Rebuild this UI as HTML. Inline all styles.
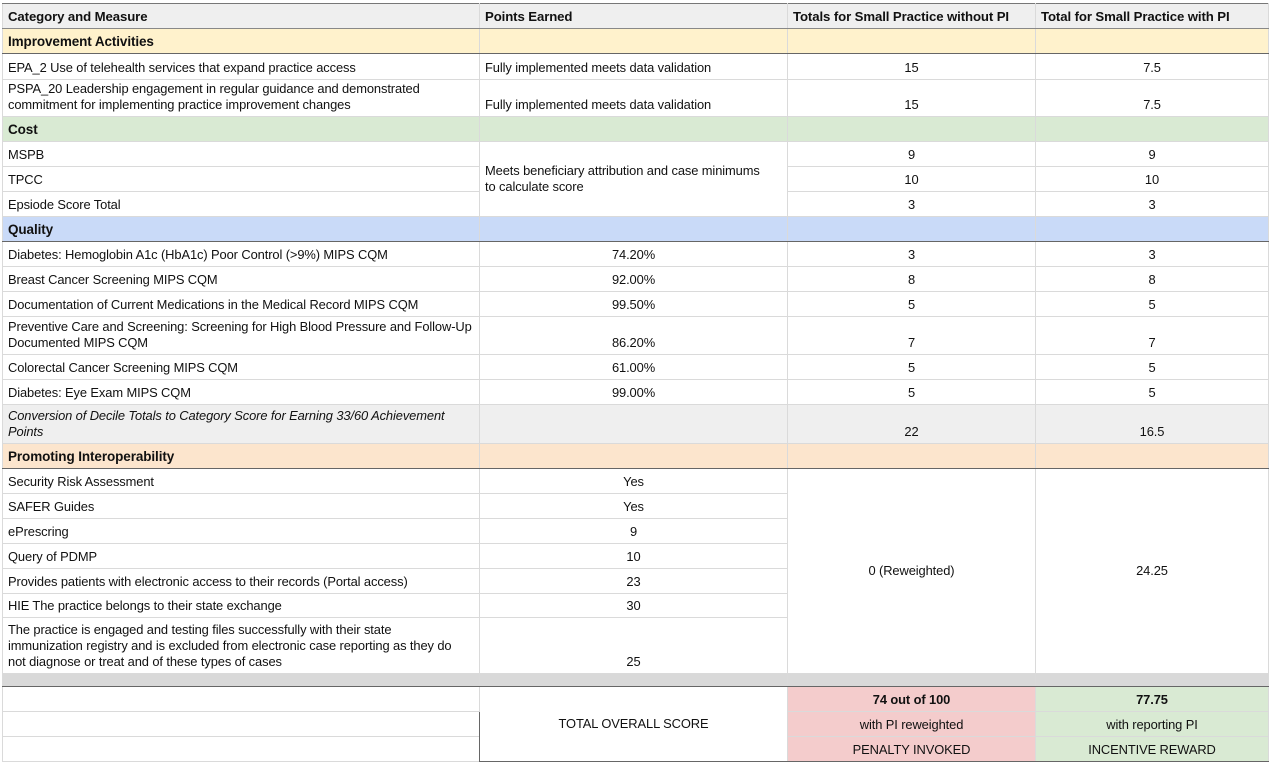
<!DOCTYPE html>
<html><head><meta charset="utf-8"><style>
body{margin:0;background:#fff;width:1270px;height:763px;overflow:hidden;font-family:"Liberation Sans",Arial,sans-serif;}
table{position:absolute;left:2px;top:3px;border-collapse:collapse;table-layout:fixed;font-size:12.9px;color:#111;}
td{border:1px solid #dadada;padding:0 5px 3px 5px;vertical-align:bottom;line-height:16px;overflow:hidden;white-space:nowrap;letter-spacing:-0.1px}
td.c{text-align:center}
td.m{vertical-align:middle;padding-bottom:0}
tr.h td{background:#efefef;font-weight:bold;border-top:1px solid #777;border-bottom:1px solid #888;font-size:13.2px}
tr.ia td{background:#fff2cc;font-weight:bold;border-bottom:1px solid #666;font-size:13.5px}
tr.co td{background:#d9ead3;font-weight:bold;font-size:13.5px}
tr.q td{background:#c9daf8;font-weight:bold;border-bottom:1px solid #666;font-size:13.5px}
tr.pi td{background:#fce5cd;font-weight:bold;border-bottom:1px solid #666;font-size:13.5px}
tr.cv td{background:#efefef}
tr.g td{background:#d9d9d9;border-bottom:1px solid #666}
.r{background:#f4cccc}.gr{background:#d9ead3}
</style></head><body>
<table>
<colgroup><col style="width:477px"><col style="width:308px"><col style="width:248px"><col style="width:233px"></colgroup>
<tr class="h" style="height:25px"><td>Category and Measure</td><td>Points Earned</td><td>Totals for Small Practice without PI</td><td>Total for Small Practice with PI</td></tr>
<tr class="ia" style="height:25px"><td>Improvement Activities</td><td></td><td></td><td></td></tr>
<tr style="height:26px"><td>EPA_2 Use of telehealth services that expand practice access</td><td>Fully implemented meets data validation</td><td class="c">15</td><td class="c">7.5</td></tr>
<tr style="height:37px"><td>PSPA_20 Leadership engagement in regular guidance and demonstrated<br>commitment for implementing practice improvement changes</td><td>Fully implemented meets data validation</td><td class="c">15</td><td class="c">7.5</td></tr>
<tr class="co" style="height:25px"><td>Cost</td><td></td><td></td><td></td></tr>
<tr style="height:25px"><td>MSPB</td><td rowspan="3" class="m">Meets beneficiary attribution and case minimums<br>to calculate score</td><td class="c">9</td><td class="c">9</td></tr>
<tr style="height:25px"><td>TPCC</td><td class="c">10</td><td class="c">10</td></tr>
<tr style="height:25px"><td>Epsiode Score Total</td><td class="c">3</td><td class="c">3</td></tr>
<tr class="q" style="height:25px"><td>Quality</td><td></td><td></td><td></td></tr>
<tr style="height:25px"><td>Diabetes: Hemoglobin A1c (HbA1c) Poor Control (&gt;9%) MIPS CQM</td><td class="c">74.20%</td><td class="c">3</td><td class="c">3</td></tr>
<tr style="height:25px"><td>Breast Cancer Screening MIPS CQM</td><td class="c">92.00%</td><td class="c">8</td><td class="c">8</td></tr>
<tr style="height:25px"><td>Documentation of Current Medications in the Medical Record MIPS CQM</td><td class="c">99.50%</td><td class="c">5</td><td class="c">5</td></tr>
<tr style="height:38px"><td>Preventive Care and Screening: Screening for High Blood Pressure and Follow-Up<br>Documented MIPS CQM</td><td class="c">86.20%</td><td class="c">7</td><td class="c">7</td></tr>
<tr style="height:25px"><td>Colorectal Cancer Screening MIPS CQM</td><td class="c">61.00%</td><td class="c">5</td><td class="c">5</td></tr>
<tr style="height:25px"><td>Diabetes: Eye Exam MIPS CQM</td><td class="c">99.00%</td><td class="c">5</td><td class="c">5</td></tr>
<tr class="cv" style="height:39px"><td style="font-style:italic">Conversion of Decile Totals to Category Score for Earning 33/60 Achievement<br>Points</td><td></td><td class="c">22</td><td class="c">16.5</td></tr>
<tr class="pi" style="height:25px"><td>Promoting Interoperability</td><td></td><td></td><td></td></tr>
<tr style="height:25px"><td>Security Risk Assessment</td><td class="c">Yes</td><td rowspan="7" class="c m">0 (Reweighted)</td><td rowspan="7" class="c m">24.25</td></tr>
<tr style="height:25px"><td>SAFER Guides</td><td class="c">Yes</td></tr>
<tr style="height:25px"><td>ePrescring</td><td class="c">9</td></tr>
<tr style="height:25px"><td>Query of PDMP</td><td class="c">10</td></tr>
<tr style="height:25px"><td>Provides patients with electronic access to their records (Portal access)</td><td class="c">23</td></tr>
<tr style="height:24px"><td>HIE The practice belongs to their state exchange</td><td class="c">30</td></tr>
<tr style="height:56px"><td>The practice is engaged and testing files successfully with their state<br>immunization registry and is excluded from electronic case reporting as they do<br>not diagnose or treat and of these types of cases</td><td class="c">25</td></tr>
<tr class="g" style="height:13px"><td style="padding:0"></td><td style="padding:0"></td><td style="padding:0"></td><td style="padding:0"></td></tr>
<tr style="height:25px"><td></td><td rowspan="3" class="c m" style="border-left:1px solid #666;border-bottom:1px solid #666">TOTAL OVERALL SCORE</td><td class="c r" style="font-weight:bold">74 out of 100</td><td class="c gr" style="font-weight:bold">77.75</td></tr>
<tr style="height:25px"><td></td><td class="c r">with PI reweighted</td><td class="c gr">with reporting PI</td></tr>
<tr style="height:25px"><td></td><td class="c r" style="border-bottom:1px solid #666">PENALTY INVOKED</td><td class="c gr" style="border-bottom:1px solid #666">INCENTIVE REWARD</td></tr>
</table>
</body></html>
